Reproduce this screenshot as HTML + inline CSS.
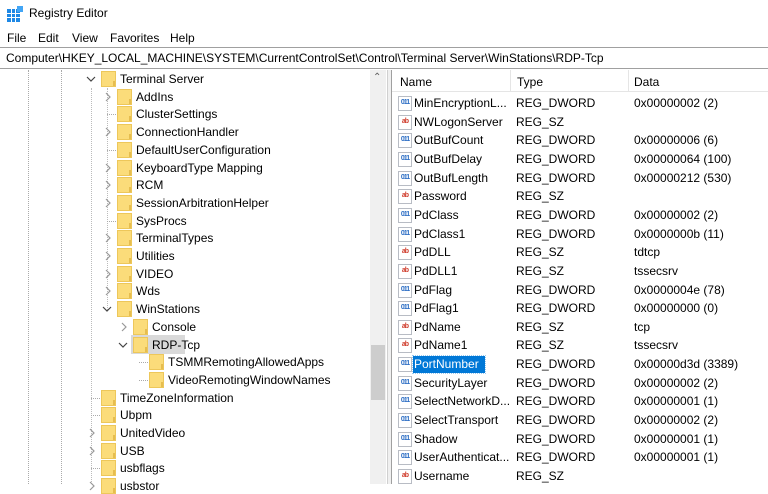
<!DOCTYPE html><html><head><style>
*{margin:0;padding:0;box-sizing:border-box}
body{width:768px;height:484px;overflow:hidden;background:#fff;font-family:"Liberation Sans",sans-serif;font-size:12px;color:#000;position:relative}
.a{position:absolute;white-space:nowrap}
.f{position:absolute;width:15px;height:16px;background:#fbdc7a;border:1px solid #edc75a}
.f:after{content:"";position:absolute;right:0;bottom:0;width:2px;height:5px;background:#e6bd4f}
.r{position:absolute;height:18px;line-height:18px;white-space:nowrap}
.ic{position:absolute;left:398px;width:14px;height:15px;border:1px solid #b8bcc4;background:#fff;font-size:7px;font-weight:bold;line-height:12px;text-align:center;letter-spacing:-1px}
.d{color:#2a6cc4}.s{color:#d04030}
</style></head><body>
<svg class="a" style="left:7px;top:6px" width="16" height="16"><rect x="0" y="3" width="13" height="13" fill="#1e88e5"/><g stroke="#fff" stroke-width="1"><line x1="0" y1="7.5" x2="13" y2="7.5"/><line x1="0" y1="11.5" x2="13" y2="11.5"/><line x1="4.5" y1="3" x2="4.5" y2="16"/><line x1="8.5" y1="3" x2="8.5" y2="16"/></g><rect x="10" y="0" width="6" height="6" fill="#42a5f5"/></svg>
<div class="a" style="left:29px;top:6px;font-size:12px">Registry Editor</div>
<div class="a" style="left:7px;top:31px">File</div><div class="a" style="left:38px;top:31px">Edit</div><div class="a" style="left:72px;top:31px">View</div><div class="a" style="left:110px;top:31px">Favorites</div><div class="a" style="left:170px;top:31px">Help</div>
<div class="a" style="left:0;top:47px;width:768px;height:22px;border:1px solid #a0a0a0;border-left:none;border-right:none;padding:3px 0 0 6px">Computer\HKEY_LOCAL_MACHINE\SYSTEM\CurrentControlSet\Control\Terminal Server\WinStations\RDP-Tcp</div>
<div class="a" style="left:28px;top:70px;height:414px;border-left:1px dotted #aaa"></div>
<div class="a" style="left:61px;top:70px;height:414px;border-left:1px dotted #aaa"></div>
<div class="a" style="left:91px;top:88px;height:396px;border-left:1px dotted #bbb"></div>
<div class="a" style="left:107px;top:88px;height:222px;border-left:1px dotted #bbb"></div>
<div class="a" style="left:370px;top:70px;width:16px;height:414px;background:#f0f0f0"></div>
<div class="a" style="left:371px;top:345px;width:14px;height:55px;background:#cdcdcd"></div>
<div class="a" style="left:373px;top:72px;font-size:10px;color:#606060">&#8963;</div>
<div class="a" style="left:387px;top:70px;width:5px;height:414px;background:#f0f0f0;border-left:1px solid #d0d0d0;border-right:1px solid #a0a0a0"></div>
<div class="a" style="left:131px;top:335px;width:54px;height:19px;background:#d9d9d9"></div>
<div id="tree"></div>
<div class="a" style="left:392px;top:70px;width:376px;height:22px;border-bottom:1px solid #e5e5e5"></div>
<div class="a" style="left:400px;top:75px">Name</div><div class="a" style="left:517px;top:75px">Type</div><div class="a" style="left:634px;top:75px">Data</div>
<div class="a" style="left:510px;top:70px;height:22px;border-left:1px solid #e5e5e5"></div>
<div class="a" style="left:628px;top:70px;height:22px;border-left:1px solid #e5e5e5"></div>
<div class="a" style="left:413px;top:356px;width:72px;height:17px;background:#0078d7;outline:1px dotted #99c9ef"></div>
<div id="list"></div>
<script>
var t=[["Terminal Server",0,"v"],["AddIns",1,">"],["ClusterSettings",1,""],["ConnectionHandler",1,">"],["DefaultUserConfiguration",1,""],["KeyboardType Mapping",1,">"],["RCM",1,">"],["SessionArbitrationHelper",1,">"],["SysProcs",1,""],["TerminalTypes",1,">"],["Utilities",1,">"],["VIDEO",1,">"],["Wds",1,">"],["WinStations",1,"v"],["Console",2,">"],["RDP-Tcp",2,"v"],["TSMMRemotingAllowedApps",3,""],["VideoRemotingWindowNames",3,""],["TimeZoneInformation",0,""],["Ubpm",0,""],["UnitedVideo",0,">"],["USB",0,">"],["usbflags",0,""],["usbstor",0,">"]];
var h="";t.forEach(function(e,i){var y=79+17.7*i,x=101+16*e[1];
h+='<div class="f" style="left:'+x+'px;top:'+(y-8)+'px"></div><div class="a" style="left:'+(x+19)+'px;top:'+(y-7)+'px">'+e[0]+'</div>';
if(e[2]=="v")h+='<svg class="a" style="left:'+(x-15)+'px;top:'+(y-4)+'px" width="10" height="8"><polyline points="1,2 5,6 9,2" fill="none" stroke="#444" stroke-width="1.2"/></svg>';
else if(e[2]==">")h+='<svg class="a" style="left:'+(x-13)+'px;top:'+(y-5)+'px" width="8" height="10"><polyline points="2,1 6,5 2,9" fill="none" stroke="#999" stroke-width="1.2"/></svg>';
else h+='<div class="a" style="left:'+(x-10)+'px;top:'+y+'px;width:9px;border-top:1px dotted #aaa"></div>';});
document.getElementById("tree").innerHTML=h;
var l=[["MinEncryptionL...","REG_DWORD","0x00000002 (2)"],["NWLogonServer","REG_SZ",""],["OutBufCount","REG_DWORD","0x00000006 (6)"],["OutBufDelay","REG_DWORD","0x00000064 (100)"],["OutBufLength","REG_DWORD","0x00000212 (530)"],["Password","REG_SZ",""],["PdClass","REG_DWORD","0x00000002 (2)"],["PdClass1","REG_DWORD","0x0000000b (11)"],["PdDLL","REG_SZ","tdtcp"],["PdDLL1","REG_SZ","tssecsrv"],["PdFlag","REG_DWORD","0x0000004e (78)"],["PdFlag1","REG_DWORD","0x00000000 (0)"],["PdName","REG_SZ","tcp"],["PdName1","REG_SZ","tssecsrv"],["PortNumber","REG_DWORD","0x00000d3d (3389)"],["SecurityLayer","REG_DWORD","0x00000002 (2)"],["SelectNetworkD...","REG_DWORD","0x00000001 (1)"],["SelectTransport","REG_DWORD","0x00000002 (2)"],["Shadow","REG_DWORD","0x00000001 (1)"],["UserAuthenticat...","REG_DWORD","0x00000001 (1)"],["Username","REG_SZ",""]];
h="";l.forEach(function(e,i){var y=103+18.65*i,d=e[1]=="REG_DWORD";
h+='<div class="ic '+(d?'d':'s')+'" style="top:'+(y-7)+'px">'+(d?'011':'ab')+'</div>';
h+='<div class="r" style="left:414px;top:'+(y-9)+'px;'+(i==14?'color:#fff':'')+'">'+e[0]+'</div><div class="r" style="left:516px;top:'+(y-9)+'px">'+e[1]+'</div><div class="r" style="left:634px;top:'+(y-9)+'px">'+e[2]+'</div>';});
document.getElementById("list").innerHTML=h;
</script>
</body></html>
